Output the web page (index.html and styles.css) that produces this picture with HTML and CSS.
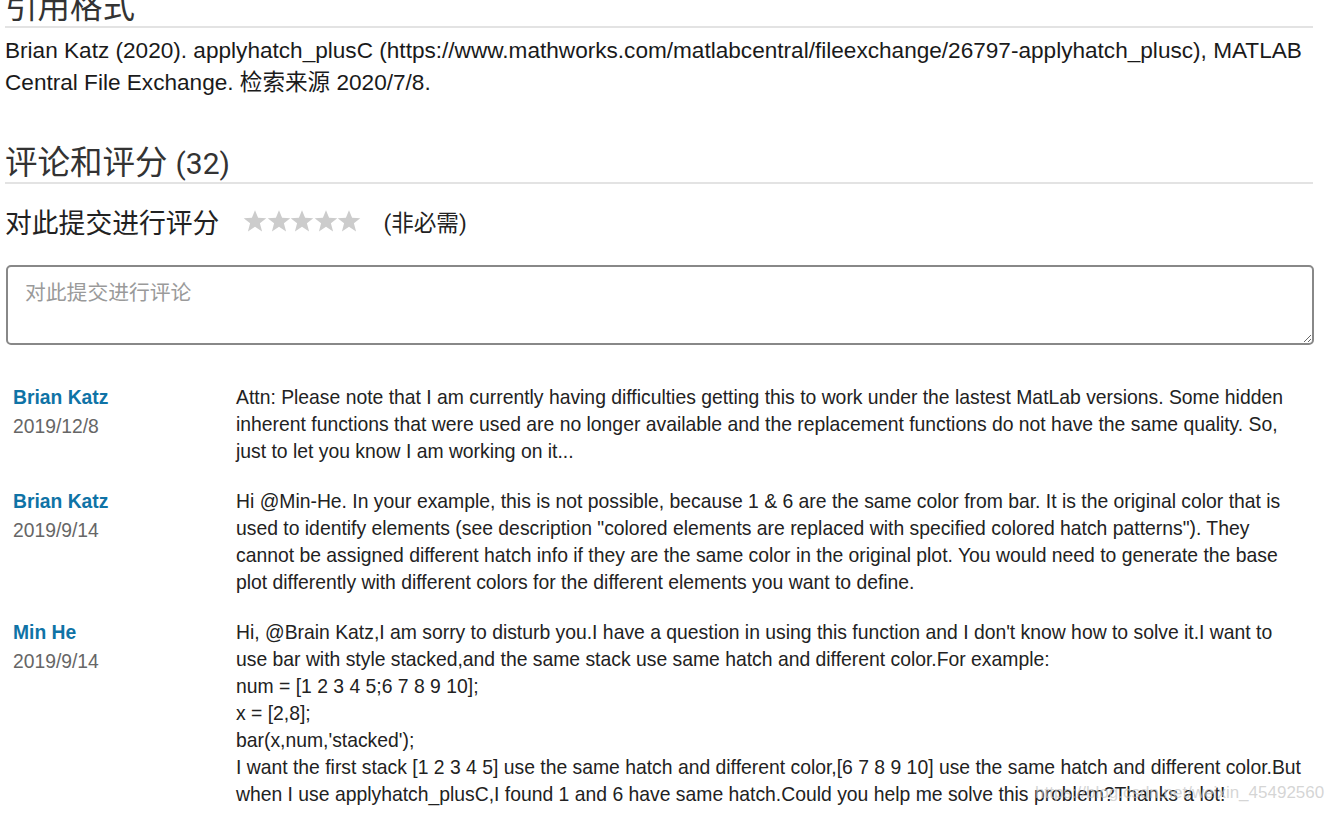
FILE: index.html
```html
<!DOCTYPE html>
<html lang="zh-CN">
<head>
<meta charset="utf-8">
<title>applyhatch_plusC</title>
<link rel="stylesheet" href="styles.css">
</head>
<body>
<div class="page">
  <h2 class="section-title first">引用格式</h2>
  <p class="citation">Brian Katz (2020). applyhatch_plusC (https://www.mathworks.com/matlabcentral/fileexchange/26797-applyhatch_plusc), MATLAB Central File Exchange. 检索来源 2020/7/8.</p>

  <h2 class="section-title second">评论和评分 <span class="count">(32)</span></h2>

  <div class="rate-row">
    <span class="rate-label">对此提交进行评分</span>
    <span class="stars">
      <svg class="star" viewBox="0 0 24 24"><polygon points="12,1.2 15.1,8.8 23.3,9.2 16.9,14.3 19.1,22.5 12,17.8 4.9,22.5 7.1,14.3 0.7,9.2 8.9,8.8"/></svg>
      <svg class="star" viewBox="0 0 24 24"><polygon points="12,1.2 15.1,8.8 23.3,9.2 16.9,14.3 19.1,22.5 12,17.8 4.9,22.5 7.1,14.3 0.7,9.2 8.9,8.8"/></svg>
      <svg class="star" viewBox="0 0 24 24"><polygon points="12,1.2 15.1,8.8 23.3,9.2 16.9,14.3 19.1,22.5 12,17.8 4.9,22.5 7.1,14.3 0.7,9.2 8.9,8.8"/></svg>
      <svg class="star" viewBox="0 0 24 24"><polygon points="12,1.2 15.1,8.8 23.3,9.2 16.9,14.3 19.1,22.5 12,17.8 4.9,22.5 7.1,14.3 0.7,9.2 8.9,8.8"/></svg>
      <svg class="star" viewBox="0 0 24 24"><polygon points="12,1.2 15.1,8.8 23.3,9.2 16.9,14.3 19.1,22.5 12,17.8 4.9,22.5 7.1,14.3 0.7,9.2 8.9,8.8"/></svg>
    </span>
    <span class="optional">(非必需)</span>
  </div>

  <textarea class="comment-box" placeholder="对此提交进行评论"></textarea>

  <div class="comments">
    <div class="comment">
      <div class="meta">
        <a class="author">Brian Katz</a>
        <div class="date">2019/12/8</div>
      </div>
      <div class="body">Attn: Please note that I am currently having difficulties getting this to work under the lastest MatLab versions. Some hidden inherent functions that were used are no longer available and the replacement functions do not have the same quality. So, just to let you know I am working on it...</div>
    </div>
    <div class="comment">
      <div class="meta">
        <a class="author">Brian Katz</a>
        <div class="date">2019/9/14</div>
      </div>
      <div class="body">Hi @Min-He. In your example, this is not possible, because 1 &amp; 6 are the same color from bar. It is the original color that is used to identify elements (see description "colored elements are replaced with specified colored hatch patterns"). They cannot be assigned different hatch info if they are the same color in the original plot. You would need to generate the base plot differently with different colors for the different elements you want to define.</div>
    </div>
    <div class="comment">
      <div class="meta">
        <a class="author">Min He</a>
        <div class="date">2019/9/14</div>
      </div>
      <div class="body">Hi, @Brain Katz,I am sorry to disturb you.I have a question in using this function and I don't know how to solve it.I want to use bar with style stacked,and the same stack use same hatch and different color.For example:<br>num = [1 2 3 4 5;6 7 8 9 10];<br>x = [2,8];<br>bar(x,num,'stacked');<br>I want the first stack [1 2 3 4 5] use the same hatch and different color,[6 7 8 9 10] use the same hatch and different color.But when I use applyhatch_plusC,I found 1 and 6 have same hatch.Could you help me solve this problem?Thanks a lot!</div>
    </div>
  </div>
</div>
<div class="watermark">https://blog.csdn.net/weixin_45492560</div>
</body>
</html>
```
FILE: styles.css
```css
html, body {
  margin: 0;
  padding: 0;
  background: #fff;
  overflow: hidden;
}
body {
  font-family: "Liberation Sans", Arial, "Noto Sans CJK SC", sans-serif;
  color: #222;
  height: 813px;
  position: relative;
}
.page {
  width: 1308px;
  padding-left: 5px;
}
.section-title {
  font-family: "Roboto", "Noto Sans CJK SC", sans-serif;
  font-weight: 400;
  font-size: 32.5px;
  line-height: 35px;
  color: #333;
  margin: 0;
  padding-bottom: 1px;
  border-bottom: 2px solid #e3e3e3;
}
.section-title.first {
  margin-top: -10px;
}
.section-title.second {
  margin-top: 47px;
  padding-bottom: 1px;
}
.count {
  font-size: 30px;
}
.citation {
  font-size: 22.6px;
  line-height: 32px;
  margin: 7px 0 0 0;
  color: #1a1a1a;
}
.rate-row {
  display: flex;
  align-items: center;
  height: 40px;
  margin-top: 17px;
}
.rate-label {
  font-family: "Noto Sans CJK SC", sans-serif;
  font-size: 26.8px;
  color: #222;
}
.stars {
  display: flex;
  margin-left: 24px;
}
.star {
  width: 24px;
  height: 24px;
  margin-right: -0.6px;
  fill: #cccccc;
}
.optional {
  font-family: "Roboto", "Noto Sans CJK SC", sans-serif;
  font-size: 22.6px;
  margin-left: 23px;
  color: #222;
}
.comment-box {
  display: block;
  box-sizing: border-box;
  width: 1308px;
  height: 80px;
  margin: 24px 0 0 1px;
  border: 2px solid #888;
  border-radius: 5px;
  padding: 9px 17px;
  font-family: "Noto Sans CJK SC", sans-serif;
  font-size: 20.8px;
  resize: vertical;
}
.comment-box::placeholder {
  color: #9a9a9a;
}
.comments {
  margin-top: 39px;
  padding-left: 8px;
  display: flex;
  flex-direction: column;
  gap: 23px;
}
.comment {
  display: grid;
  grid-template-columns: 223px 1068px;
  font-size: 19.35px;
  line-height: 27px;
}
.meta {
  font-size: 19.3px;
}
.author {
  display: block;
  color: #0f73a6;
  font-weight: bold;
  text-decoration: none;
}
.date {
  color: #666;
  margin-top: 2px;
}
.body {
  color: #222;
}
.watermark {
  position: absolute;
  left: 1035px;
  top: 783px;
  font-family: "Liberation Sans", Arial, sans-serif;
  font-size: 17px;
  color: rgba(195, 195, 195, 0.7);
  white-space: nowrap;
}
```
